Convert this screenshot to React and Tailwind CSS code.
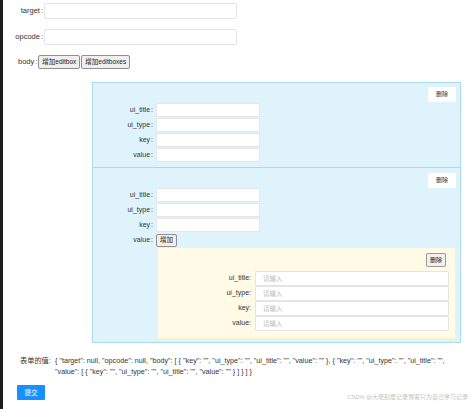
import React from 'react';

const font = { fontFamily: '"Liberation Sans", Arial, "Noto Sans CJK SC", sans-serif' };

const jsonValue =
  '{ "target": null, "opcode": null, "body": [ { "key": "", "ui_type": "", "ui_title": "", "value": "" }, { "key": "", "ui_type": "", "ui_title": "", "value": [ { "key": "", "ui_type": "", "ui_title": "", "value": "" } ] } ] }';

function Field({ label, children }) {
  return (
    <div className="flex items-center h-[14px]">
      <span className="w-[63px] pr-[3px] text-right text-[7px] text-[#333]">
        {label}<span className="ml-[1px]">:</span>
      </span>
      {children}
    </div>
  );
}

function BlankInput() {
  return <div className="w-[104px] h-[14px] bg-white border border-[#e6e6e6]" />;
}

function WhiteDelete() {
  return (
    <div className="flex justify-end">
      <button className="w-[28px] h-[15px] bg-white text-[6px] text-[#333] rounded-[1px]">删除</button>
    </div>
  );
}

function InnerField({ label }) {
  return (
    <div className="flex items-center h-[15px]">
      <span className="w-[97px] pr-[4px] text-right text-[7px] text-[#333]">{label}:</span>
      <div className="w-[194px] h-[15px] bg-white border border-[#e4e4e4] rounded-[1px] flex items-center pl-[7px] text-[6.5px] text-[#bbb]">
        请输入
      </div>
    </div>
  );
}

export default function App() {
  return (
    <div className="flex w-[474px] h-[409px] bg-white overflow-hidden" style={font}>
      {/* dark side strip */}
      <div className="w-[3px] h-full bg-[#1c1c1c] flex-shrink-0" />

      <div className="flex-1 relative">
        {/* target */}
        <div className="flex items-center mt-[3px]">
          <span className="w-[41px] pr-[1px] text-right text-[7.5px] text-[#333]">
            target<span className="ml-[1px]">:</span>
          </span>
          <div className="w-[193px] h-[16px] border border-[#e3e3e3] rounded-[2px]" />
        </div>

        {/* opcode */}
        <div className="flex items-center mt-[10px]">
          <span className="w-[41px] pr-[1px] text-right text-[7.5px] text-[#333]">
            opcode<span className="ml-[1px]">:</span>
          </span>
          <div className="w-[193px] h-[16px] border border-[#e3e3e3] rounded-[2px]" />
        </div>

        {/* body */}
        <div className="flex items-center mt-[10px] pl-[15px]">
          <span className="text-[7.5px] text-[#333] pr-[1px]">
            body<span className="ml-[1px]">:</span>
          </span>
          <button className="h-[14px] px-[3px] bg-[#efefef] border border-[#8f8f8f] rounded-[2px] text-[6.5px] text-[#222]">增加editbox</button>
          <button className="h-[14px] px-[3px] ml-[1px] bg-[#efefef] border border-[#8f8f8f] rounded-[2px] text-[6.5px] text-[#222]">增加editboxes</button>
        </div>

        {/* edit boxes */}
        <div className="ml-[89px] mt-[13px] w-[369px]">
          <div className="bg-[#dff3fc] border border-[#a9daf2] pt-[4px] pr-[4px] pb-[5px]">
            <WhiteDelete />
            <div className="flex flex-col gap-[1px] mt-[1px]">
              <Field label="ui_title"><BlankInput /></Field>
              <Field label="ui_type"><BlankInput /></Field>
              <Field label="key"><BlankInput /></Field>
              <Field label="value"><BlankInput /></Field>
            </div>
          </div>

          <div className="bg-[#dff3fc] border border-t-0 border-[#a9daf2] pt-[5px] pr-[4px] pb-[3px]">
            <WhiteDelete />
            <div className="flex flex-col gap-[1px]">
              <Field label="ui_title"><BlankInput /></Field>
              <Field label="ui_type"><BlankInput /></Field>
              <Field label="key"><BlankInput /></Field>
              <Field label="value">
                <button className="h-[13px] px-[3px] bg-[#efefef] border border-[#8f8f8f] rounded-[2px] text-[6.5px] text-[#222]">增加</button>
              </Field>
            </div>

            {/* nested box */}
            <div className="ml-[64px] bg-[#fffbe6] border border-[#fdf0c4] pt-[5px] pr-[6px] pb-[7px]">
              <div className="flex justify-end pr-[3px]">
                <button className="w-[20px] h-[14px] bg-[#f0f0f0] border border-[#999] rounded-[2px] text-[6px] text-[#222]">删除</button>
              </div>
              <div className="flex flex-col mt-[4px]">
                <InnerField label="ui_title" />
                <InnerField label="ui_type" />
                <InnerField label="key" />
                <InnerField label="value" />
              </div>
            </div>
          </div>
        </div>

        {/* form value */}
        <div className="flex mt-[12px] pl-[17px] pr-[24px] text-[7.2px] leading-[11px] text-[#333]">
          <span className="flex-shrink-0 w-[35px] whitespace-nowrap">表单的值:</span>
          <p className="flex-1">{jsonValue}</p>
        </div>

        <button className="block ml-[14px] mt-[8px] w-[28px] h-[15px] bg-[#1890ff] text-white text-[6.5px] rounded-[1px]">提交</button>

        <span className="absolute right-[6px] bottom-[7px] text-[6px] text-[#c4c4c4]">CSDN @大佬别居记录博客只为自己学习记录</span>
      </div>
    </div>
  );
}
